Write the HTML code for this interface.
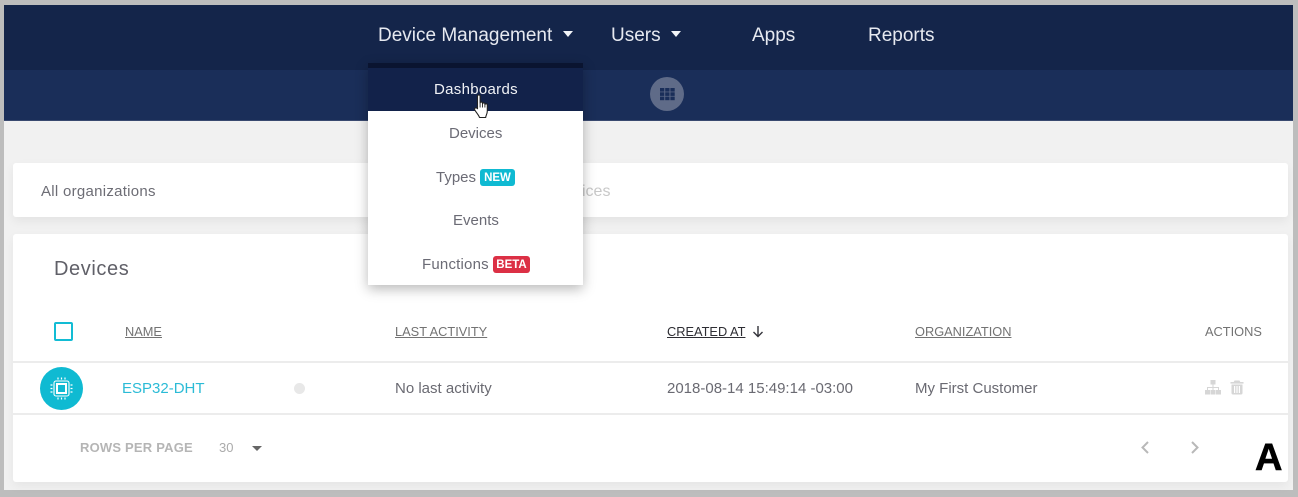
<!DOCTYPE html>
<html>
<head>
<meta charset="utf-8">
<style>
html,body{margin:0;padding:0;}
body{width:1298px;height:497px;position:relative;overflow:hidden;background:#bdbdbd;font-family:"Liberation Sans",sans-serif;}
.a{position:absolute;white-space:nowrap;}
.nav{font-size:19px;color:#e6e9f0;top:24px;line-height:24px;font-family:"Liberation Sans",sans-serif;}
.dd{font-size:15px;color:#6b6b75;line-height:20px;font-family:"Liberation Sans",sans-serif;}
.th{font-size:12.8px;color:#737373;text-decoration:underline;line-height:16px;top:324px;}
.td{font-size:15px;color:#6a6a72;line-height:18px;top:380px;}
.caret{width:0;height:0;border-left:5.5px solid transparent;border-right:5.5px solid transparent;border-top:6px solid #f2f4f8;}
</style>
</head>
<body>
<div class="a" style="left:4px;top:5px;width:1289px;height:485px;background:#f1f1f1;"></div>
<div class="a" style="left:4px;top:5px;width:1289px;height:65px;background:#14254a;"></div>
<div class="a" style="left:4px;top:70px;width:1289px;height:50px;background:#1a2e59;"></div>
<div class="a" style="left:4px;top:120px;width:1289px;height:1px;background:#3a4a70;"></div>

<div class="a nav" style="left:378px;">Device Management</div>
<div class="a caret" style="left:563px;top:31px;"></div>
<div class="a nav" style="left:611px;">Users</div>
<div class="a caret" style="left:671px;top:31px;"></div>
<div class="a nav" style="left:752px;">Apps</div>
<div class="a nav" style="left:868px;">Reports</div>

<div class="a" style="left:650px;top:77px;width:34px;height:34px;border-radius:50%;background:#5f6b88;"></div>
<svg class="a" style="left:660px;top:87px;" width="15" height="14" viewBox="0 0 15 14"><g fill="#1a2e59"><rect x="0" y="1" width="4.300" height="3.600"/><rect x="5.200" y="1" width="4.300" height="3.600"/><rect x="10.400" y="1" width="4.300" height="3.600"/><rect x="0" y="5.300" width="4.300" height="3.600"/><rect x="5.200" y="5.300" width="4.300" height="3.600"/><rect x="10.400" y="5.300" width="4.300" height="3.600"/><rect x="0" y="9.600" width="4.300" height="3.600"/><rect x="5.200" y="9.600" width="4.300" height="3.600"/><rect x="10.400" y="9.600" width="4.300" height="3.600"/></g></svg>

<!-- filter card -->
<div class="a" style="left:13px;top:163px;width:1275px;height:54px;background:#fff;border-radius:3px;box-shadow:0 4px 10px rgba(0,0,0,.06);"></div>
<div class="a" style="left:41px;top:182px;font-size:15px;line-height:20px;color:#6d6d75;letter-spacing:.28px;">All organizations</div>
<div class="a" style="left:582px;top:182px;font-size:16px;line-height:20px;color:#c8c8c8;">ices</div>

<!-- table card -->
<div class="a" style="left:13px;top:234px;width:1275px;height:248px;background:#fff;border-radius:3px;box-shadow:0 4px 10px rgba(0,0,0,.05);"></div>
<div class="a" style="left:54px;top:257px;font-size:20px;line-height:24px;color:#606068;letter-spacing:.6px;">Devices</div>

<div class="a" style="left:54px;top:322px;width:15px;height:15px;border:2px solid #12bcd4;border-radius:2px;"></div>
<div class="a th" style="left:125px;">NAME</div>
<div class="a th" style="left:395px;">LAST ACTIVITY</div>
<div class="a th" style="left:667px;color:#2d2d33;">CREATED AT</div>
<svg class="a" style="left:752px;top:325px;" width="12" height="13" viewBox="0 0 12 13"><path d="M6 1V11.500M1.500 7L6 11.500L10.500 7" fill="none" stroke="#33333a" stroke-width="1.400"/></svg>
<div class="a th" style="left:915px;">ORGANIZATION</div>
<div class="a th" style="left:1205px;text-decoration:none;">ACTIONS</div>

<div class="a" style="left:13px;top:361px;width:1275px;height:2px;background:#ececec;"></div>
<div class="a" style="left:13px;top:413px;width:1275px;height:2px;background:#ececec;"></div>

<div class="a" style="left:40px;top:367px;width:43px;height:43px;border-radius:50%;background:#0fbad2;"></div>
<svg class="a" style="left:49px;top:376px;" width="25" height="25" viewBox="0 0 25 25"><rect x="8" y="8" width="9" height="9" fill="none" stroke="#fff" stroke-width="2"/><rect x="5" y="5" width="15" height="15" rx="2" fill="none" stroke="#fff" stroke-width="1.100"/><path d="M9 1.500v2M12.500 1.500v2M16 1.500v2M9 21.500v2M12.500 21.500v2M16 21.500v2M1.500 9h2M1.500 12.500h2M1.500 16h2M21.500 9h2M21.500 12.500h2M21.500 16h2" stroke="#fff" stroke-width="1.200" fill="none"/></svg>
<div class="a td" style="left:122px;color:#2bbbd6;">ESP32-DHT</div>
<div class="a" style="left:294px;top:383px;width:11px;height:11px;border-radius:50%;background:#e8e8e8;"></div>
<div class="a td" style="left:395px;">No last activity</div>
<div class="a td" style="left:667px;">2018-08-14 15:49:14 -03:00</div>
<div class="a td" style="left:915px;">My First Customer</div>

<svg class="a" style="left:1204px;top:380px;" width="18" height="15" viewBox="0 0 18 15"><path d="M6.500 0h5v4.500h-5zM8.500 4.500h1V7h5.500v3h-1V8H9.500v2h-1V8H4v2H3V7h5.500zM1 10h5v4.500H1zM6.500 10h5v4.500h-5zM12 10h5v4.500h-5z" fill="#d6d6d6"/></svg>
<svg class="a" style="left:1230px;top:380px;" width="14" height="15" viewBox="0 0 14 15"><path d="M4.500 0.500h5l.8 1.500H13.500v1.600H.5V2H3.700zM1.500 4.500h11V13a1.500 1.500 0 0 1-1.500 1.500H3A1.500 1.500 0 0 1 1.500 13zM4 6v7h1.200V6zM6.400 6v7h1.200V6zM8.800 6v7H10V6z" fill="#d6d6d6" fill-rule="evenodd"/></svg>

<div class="a" style="left:80px;top:440px;font-size:13px;font-weight:bold;line-height:16px;color:#b5b5b5;letter-spacing:.2px;">ROWS PER PAGE</div>
<div class="a" style="left:219px;top:440px;font-size:13px;line-height:16px;color:#ababab;">30</div>
<div class="a" style="left:252px;top:446px;width:0;height:0;border-left:5px solid transparent;border-right:5px solid transparent;border-top:5px solid #666;"></div>

<svg class="a" style="left:1139px;top:440px;" width="12" height="15" viewBox="0 0 12 15"><path d="M9 2L3.500 7.500L9 13" fill="none" stroke="#b8b8b8" stroke-width="2"/></svg>
<svg class="a" style="left:1189px;top:440px;" width="12" height="15" viewBox="0 0 12 15"><path d="M3 2L8.500 7.500L3 13" fill="none" stroke="#b8b8b8" stroke-width="2"/></svg>

<div class="a" style="left:1255px;top:436px;font-size:38px;font-weight:bold;line-height:44px;color:#000;-webkit-text-stroke:.6px #000;">A</div>

<!-- dropdown -->
<div class="a" style="left:368px;top:63px;width:215px;height:222px;background:#fff;box-shadow:0 4px 12px rgba(0,0,0,.28);"></div>
<div class="a" style="left:368px;top:63px;width:215px;height:48px;background:#12224a;"></div>
<div class="a" style="left:368px;top:63px;width:215px;height:5px;background:#0a1430;"></div>
<div class="a dd" style="left:434px;top:80px;color:#f0f2f6;letter-spacing:.3px;">Dashboards</div>
<div class="a dd" style="left:449px;top:124px;">Devices</div>
<div class="a dd" style="left:436px;top:168px;">Types</div>
<div class="a" style="left:480px;top:169px;width:35px;height:17px;border-radius:3px;background:#0fbad2;color:#fff;font-size:11.500px;font-weight:bold;line-height:18px;text-align:center;">NEW</div>
<div class="a dd" style="left:453px;top:211px;">Events</div>
<div class="a dd" style="left:422px;top:255px;letter-spacing:.2px;">Functions</div>
<div class="a" style="left:493px;top:256px;width:37px;height:17px;border-radius:3px;background:#dc3045;color:#fff;font-size:11.500px;font-weight:bold;line-height:18px;text-align:center;">BETA</div>

<!-- cursor -->
<svg class="a" style="left:473px;top:94px;" width="19" height="26" viewBox="0 0 19 26"><path d="M4.500 2.200c0-1.600 2.600-1.600 2.600 0V9c0-1.300 2.400-1.300 2.400 0v.8c0-1.200 2.400-1.200 2.400 0v.8c0-1.100 2.400-1.100 2.400.2v6.200c0 3-1.600 4.700-1.600 6.500H6.500c-.5-2-3-4.500-4.700-7.500-.9-1.700 1-3 2.700-1.300z" fill="#fff" stroke="#222" stroke-width="1.100" stroke-linejoin="round"/><path d="M7.100 9v4.500M9.500 9.500v4M11.900 10.500v3" stroke="#222" stroke-width=".9" fill="none"/></svg>
</body>
</html>
